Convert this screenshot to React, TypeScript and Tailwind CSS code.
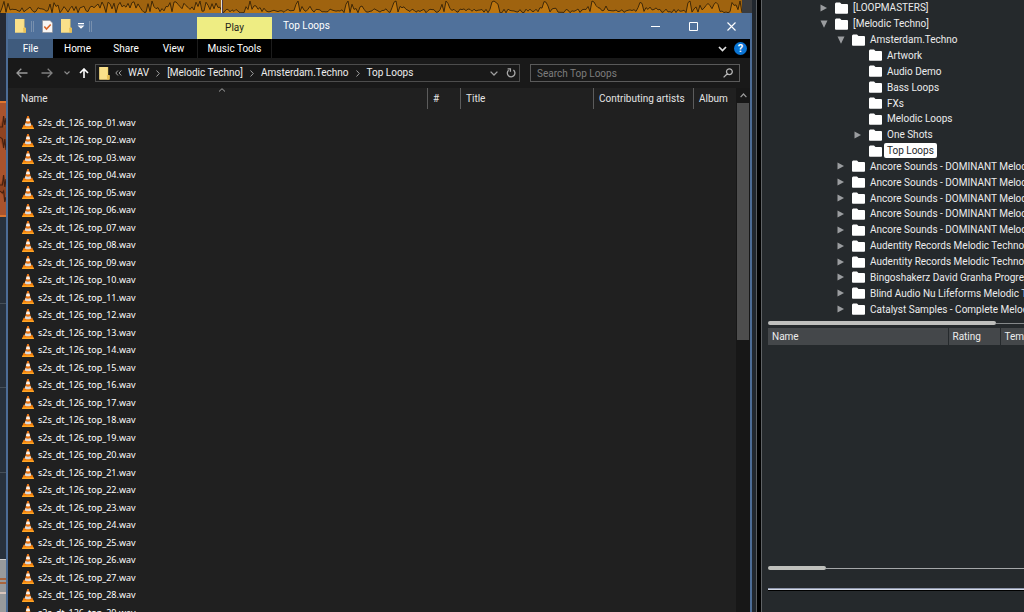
import { ReactNode } from "react";

type IconProps = { className?: string };

const files = Array.from(
  { length: 29 },
  (_, i) => `s2s_dt_126_top_${String(i + 1).padStart(2, "0")}.wav`,
);

type Node = { level: number; name: string; state?: "open" | "closed"; selected?: boolean };

const tree: Node[] = [
  { level: 0, name: "[LOOPMASTERS]", state: "closed" },
  { level: 0, name: "[Melodic Techno]", state: "open" },
  { level: 1, name: "Amsterdam.Techno", state: "open" },
  { level: 2, name: "Artwork" },
  { level: 2, name: "Audio Demo" },
  { level: 2, name: "Bass Loops" },
  { level: 2, name: "FXs" },
  { level: 2, name: "Melodic Loops" },
  { level: 2, name: "One Shots", state: "closed" },
  { level: 2, name: "Top Loops", selected: true },
  { level: 1, name: "Ancore Sounds - DOMINANT Melodic", state: "closed" },
  { level: 1, name: "Ancore Sounds - DOMINANT Melodic", state: "closed" },
  { level: 1, name: "Ancore Sounds - DOMINANT Melodic", state: "closed" },
  { level: 1, name: "Ancore Sounds - DOMINANT Melodic", state: "closed" },
  { level: 1, name: "Ancore Sounds - DOMINANT Melodic", state: "closed" },
  { level: 1, name: "Audentity Records Melodic Techno", state: "closed" },
  { level: 1, name: "Audentity Records Melodic Techno", state: "closed" },
  { level: 1, name: "Bingoshakerz David Granha Progressive", state: "closed" },
  { level: 1, name: "Blind Audio Nu Lifeforms Melodic Techno", state: "closed" },
  { level: 1, name: "Catalyst Samples - Complete Melodic", state: "closed" },
];

const indent = ["pl-[52px]", "pl-[69px]", "pl-[86px]"];

function wavePoints(width: number) {
  let seed = 11;
  const next = () => {
    seed = (seed * 16807) % 2147483647;
    return seed / 2147483647;
  };
  const points: string[] = [];
  for (let x = 0; x <= width; x += 2) {
    const dense = (x > 100 && x < 222) || x > 690;
    const beat = x % 49;
    const reach = beat < 10 || dense ? 11 : beat < 20 || x < 100 ? 7 : 4;
    const lift = beat === 4 || beat === 5 ? 8 : 0;
    points.push(`${x},${Math.max(1, 12.8 - next() * reach - lift).toFixed(1)}`);
  }
  return points.join(" ");
}

const wave = wavePoints(742);

function TopWave() {
  return (
    <svg className="h-[13px] min-w-0 flex-1" viewBox="0 0 742 13" preserveAspectRatio="none" aria-hidden="true">
      <rect width="742" height="13" fill="#9f630f" />
      <polygon points={`0,14 ${wave} 742,14`} fill="#bd7610" />
      <polyline points={wave} fill="none" stroke="#3f2808" strokeWidth="1" />
      <rect x="221" width="1" height="13" fill="#e8dfd0" />
      <rect x="222" width="1" height="13" fill="#4a3a4a" />
    </svg>
  );
}

function SideWave() {
  return (
    <svg className="h-[116px] w-full" viewBox="0 0 5 116" preserveAspectRatio="none" aria-hidden="true">
      <rect width="5" height="116" fill="#a9532d" />
      <rect width="5" height="2" fill="#e0762f" />
      <rect y="114" width="5" height="2" fill="#d9742f" />
      <path d="M0 26 1 20 2 24 3 15 4 28 5 18V46L4 37 3 49 2 38 1 44 0 36ZM0 84 1 80 2 84 3 74 4 88 5 78V92L4 101 3 88 2 94 0 90Z" fill="#8f4321" />
      <path d="M0 26H2L3 15 4 24 5 17M0 36 2 38 3 47 4 38 5 49M0 84H2L3 74 4 86 5 78M0 90 2 92 3 90 4 101 5 96" fill="none" stroke="#47200f" strokeWidth="1" />
    </svg>
  );
}

function YellowFolder({ className }: IconProps) {
  return (
    <svg className={className} viewBox="0 0 12 14" aria-hidden="true">
      <path d="M1 0H10.5V8.5L12 9V13.5H1Z" fill="#f1cf68" />
      <path d="M1 0H9.8V13.5H1Z" fill="#fae08a" />
      <path d="M9 9 10.5 8.5 12 9V13.5L9.6 14Z" fill="#e8c057" />
    </svg>
  );
}

function TaskIcon({ className }: IconProps) {
  return (
    <svg className={className} viewBox="0 0 11 13" aria-hidden="true">
      <path d="M.5.5H8L10.5 3V12.5H.5Z" fill="#f8f6f4" stroke="#8d8f96" strokeWidth=".6" />
      <path d="M2.3 6.5 4.5 9 8.7 4.5" fill="none" stroke="#d9662a" strokeWidth="1.6" />
    </svg>
  );
}

function Cone({ className }: IconProps) {
  return (
    <svg className={className} viewBox="0 0 12 13" aria-hidden="true">
      <path d="M1.6 8.8H10.4L12 12.9H0Z" fill="#f07a08" />
      <path d="M.5 11.6H11.5L12 13H0Z" fill="#ffa726" />
      <path d="M5.2 0H6.8L9.3 9.6Q6 11.4 2.7 9.6Z" fill="#ea7413" />
      <path d="M4.6 2.5H7.4L8.1 5Q6 5.8 3.9 5Z" fill="#f3f1ee" />
      <path d="M3.4 7.1Q6 8.2 8.6 7.1L9.2 9.5Q6 11.2 2.8 9.5Z" fill="#dcdcdc" />
    </svg>
  );
}

function Stroke({ className, d, box = "0 0 12 12", w = 1.4 }: IconProps & { d: string; box?: string; w?: number }) {
  return (
    <svg className={className} viewBox={box} fill="none" stroke="currentColor" strokeWidth={w} aria-hidden="true">
      <path d={d} />
    </svg>
  );
}

function Folder() {
  return (
    <svg className="h-[12px] w-[13px] shrink-0" viewBox="0 0 13 12" aria-hidden="true">
      <path d="M0 2Q0 .5 1.2.5H5L6.5 2H12Q13 2 13 3V11Q13 11.8 12 11.8H1Q0 11.8 0 11Z" fill="#fff" />
    </svg>
  );
}

function IconButton({ label, className, children }: { label: string; className?: string; children: ReactNode }) {
  return (
    <button type="button" aria-label={label} className={`flex shrink-0 items-center justify-center ${className ?? ""}`}>
      {children}
    </button>
  );
}

function TitleBar() {
  return (
    <header className="flex h-[26px] shrink-0 items-stretch bg-[#50719b]">
      <div className="flex w-[189px] items-center pl-[6px]">
        <YellowFolder className="h-[14px] w-[12px]" />
        <span className="ml-[5px] h-[11px] w-[3px] border-x border-[#7890ae]" />
        <IconButton label="Properties" className="ml-[8px]">
          <TaskIcon className="h-[13px] w-[11px]" />
        </IconButton>
        <IconButton label="New folder" className="ml-[7px]">
          <YellowFolder className="h-[14px] w-[12px]" />
        </IconButton>
        <IconButton label="Customize Quick Access Toolbar" className="ml-[5px] text-white">
          <Stroke className="h-[6px] w-[8px]" box="0 0 8 6" d="M1 .7H7M2 3 4 5 6 3Z" w={1.2} />
        </IconButton>
        <span className="ml-[4px] h-[11px] w-[3px] border-x border-[#7890ae]" />
      </div>
      <div className="mt-[4px] flex w-[75px] items-center justify-center bg-[#eeed83] text-[#24241c]">Play</div>
      <h1 className="flex flex-1 items-center pl-[11px] text-white">Top Loops</h1>
      <IconButton label="Minimize" className="w-[38px] text-white">
        <Stroke className="size-[9px]" box="0 0 9 9" d="M0 4.5H9" w={1} />
      </IconButton>
      <IconButton label="Maximize" className="w-[38px] text-white">
        <Stroke className="size-[9px]" box="0 0 9 9" d="M.5.5H8.5V8.5H.5Z" w={1} />
      </IconButton>
      <IconButton label="Close" className="w-[38px] text-white">
        <Stroke className="size-[9px]" box="0 0 9 9" d="M.5.5 8.5 8.5M8.5.5.5 8.5" w={1.1} />
      </IconButton>
    </header>
  );
}

function Ribbon() {
  return (
    <nav className="flex h-[19px] shrink-0 items-stretch bg-black text-white">
      <button type="button" className="w-[45px] bg-[#3f5b7d]">File</button>
      <button type="button" className="w-[49px]">Home</button>
      <button type="button" className="w-[48px]">Share</button>
      <button type="button" className="w-[47px]">View</button>
      <button type="button" className="w-[75px] border-x border-[#1c1c1c]">Music Tools</button>
      <span className="flex-1" />
      <IconButton label="Collapse ribbon" className="w-[16px] text-[#e0e0e0]">
        <Stroke className="h-[6px] w-[9px]" box="0 0 9 6" d="M1 1 4.5 4.5 8 1" w={1.7} />
      </IconButton>
      <button
        type="button"
        aria-label="Help"
        className="mr-[3px] ml-[4px] size-[13px] self-center rounded-full bg-[#0a74d4] text-[11px] leading-[13px] font-bold"
      >
        ?
      </button>
    </nav>
  );
}

function Crumb({ children, last }: { children: string; last?: boolean }) {
  return (
    <>
      <a href="#" className="whitespace-nowrap text-[#ededed]">{children}</a>
      {!last && <Stroke className="mx-[7px] h-[7px] w-[4px] text-[#a0a0a0]" box="0 0 4 7" d="M.5.5 3.3 3.5.5 6.5" w={1} />}
    </>
  );
}

function AddressBar() {
  return (
    <div className="flex h-[30px] shrink-0 items-center bg-[#191919] pr-[10px]">
      <IconButton label="Back" className="ml-[8px] text-[#9a9a9a]">
        <Stroke className="h-[10px] w-[12px]" box="0 0 12 10" d="M11.5 5H1M5.3.8 1 5 5.3 9.2" w={1.3} />
      </IconButton>
      <IconButton label="Forward" className="ml-[13px] text-[#808080]">
        <Stroke className="h-[10px] w-[12px]" box="0 0 12 10" d="M.5 5H11M6.7.8 11 5 6.7 9.2" w={1.3} />
      </IconButton>
      <IconButton label="Recent locations" className="ml-[11px] text-[#8a8a8a]">
        <Stroke className="h-[4px] w-[6px]" box="0 0 6 4" d="M.5.5 3 3 5.5.5" w={1.2} />
      </IconButton>
      <IconButton label="Up" className="ml-[9px] text-white">
        <Stroke className="size-[10px]" box="0 0 10 10" d="M5 10V1M1 5 5 1 9 5" w={1.6} />
      </IconButton>
      <div className="ml-[6px] flex h-[18px] min-w-0 flex-1 items-center border border-[#4d4d4d] pl-[2px]">
        <YellowFolder className="h-[13px] w-[12px]" />
        <Stroke className="mr-[6px] ml-[5px] h-[6px] w-[7px] text-[#a0a0a0]" box="0 0 7 6" d="M3 .5.8 3 3 5.5M6.3.5 4.1 3 6.3 5.5" w={1} />
        <Crumb>WAV</Crumb>
        <Crumb>[Melodic Techno]</Crumb>
        <Crumb>Amsterdam.Techno</Crumb>
        <Crumb last>Top Loops</Crumb>
        <span className="flex-1" />
        <IconButton label="Previous locations" className="mr-[8px] text-[#a0a0a0]">
          <Stroke className="h-[5px] w-[8px]" box="0 0 8 5" d="M.6.6 4 4 7.4.6" w={1.3} />
        </IconButton>
        <IconButton label="Refresh" className="mr-[3px] text-[#a8a8a8]">
          <Stroke className="size-[10px]" box="0 0 10 10" d="M7.4 2A3.8 3.8 0 1 1 2.6 2.2M1.6.8H4.4V3.8" w={1.3} />
        </IconButton>
      </div>
      <div className="ml-[10px] flex h-[18px] w-[210px] items-center border border-[#5a5a5a]">
        <input
          type="search"
          aria-label="Search Top Loops"
          placeholder="Search Top Loops"
          className="h-full min-w-0 flex-1 bg-transparent pl-[6px] text-white outline-none placeholder:text-[#7d7d7d]"
        />
        <IconButton label="Search" className="mr-[6px] text-[#b5b5b5]">
          <Stroke className="size-[10px]" box="0 0 10 10" d="M9.3 3.7A2.9 2.9 0 1 1 3.5 3.7 2.9 2.9 0 1 1 9.3 3.7M4.3 5.7.6 9.4" w={1.3} />
        </IconButton>
      </div>
    </div>
  );
}

function Heading({ children, sorted }: { children: string; sorted?: boolean }) {
  return (
    <th scope="col" className="group h-[26px] p-0 text-left align-top font-normal">
      <div className="relative flex h-[21px] items-center border-r border-[#5c5c5c] pl-[5px] whitespace-nowrap text-[#e4e4e4] group-last:border-r-0">
        {children}
        {sorted && <Stroke className="absolute top-0 left-1/2 h-[4px] w-[7px] -translate-x-1/2 text-[#a0a0a0]" box="0 0 7 4" d="M.5 3.5 3.5.7 6.5 3.5" w={1} />}
      </div>
    </th>
  );
}

function FileList() {
  return (
    <div className="flex min-h-0 flex-1">
      <main className="min-w-0 flex-1 overflow-hidden pl-[8px]">
        <table className="w-full table-fixed border-collapse">
          <colgroup>
            <col />
            <col className="w-[33px]" />
            <col className="w-[133px]" />
            <col className="w-[100px]" />
            <col className="w-[42px]" />
          </colgroup>
          <thead>
            <tr>
              <Heading sorted>Name</Heading>
              <Heading>#</Heading>
              <Heading>Title</Heading>
              <Heading>Contributing artists</Heading>
              <Heading>Album</Heading>
            </tr>
          </thead>
          <tbody className="font-['Noto_Sans',sans-serif] text-[9px]">
            {files.map((file) => (
              <tr key={file} className="h-[17px] even:h-[18px]">
                <td className="p-0">
                  <div className="flex h-[17px] items-center gap-[4px] pl-[6px] whitespace-nowrap text-white">
                    <Cone className="h-[13px] w-[12px]" />
                    {file}
                  </div>
                </td>
                <td className="p-0" />
                <td className="p-0" />
                <td className="p-0" />
                <td className="p-0" />
              </tr>
            ))}
          </tbody>
        </table>
      </main>
      <div className="flex w-[14px] shrink-0 flex-col bg-[#171717] px-[1px]">
        <IconButton label="Scroll up" className="h-[15px] text-[#9a9a9a]">
          <Stroke className="h-[5px] w-[7px]" box="0 0 7 5" d="M.6 4.2 3.5 1 6.4 4.2" w={1.2} />
        </IconButton>
        <div className="h-[237px] bg-[#4d4d4d]" />
      </div>
    </div>
  );
}

function Explorer() {
  return (
    <section aria-label="Top Loops" className="flex min-w-0 flex-1 flex-col border-x-2 border-[#4c6c96] bg-[#202020]">
      <TitleBar />
      <Ribbon />
      <AddressBar />
      <FileList />
    </section>
  );
}

function LeftTracks() {
  return (
    <div className="flex w-[6px] shrink-0 flex-col bg-[#28313c]" aria-hidden="true">
      <div className="h-[88px] bg-[#252a35]" />
      <SideWave />
      <div className="mt-[86px] h-px bg-[#46505a]" />
      <div className="mt-[83px] h-px bg-[#46505a]" />
      <div className="mt-[84px] h-px bg-[#46505a]" />
      <div className="mt-[86px] flex-1 border-t border-[#d0d0d0] bg-[#989a9c]">
        <div className="mt-[18px] h-[2px] bg-[#a9643c]" />
        <div className="mt-[2px] h-[2px] bg-[#a9643c]" />
        <div className="mt-[8px] h-[2px] bg-[#d8c5bc]" />
      </div>
    </div>
  );
}

function TreeRow({ node }: { node: Node }) {
  return (
    <li className={`flex items-center whitespace-nowrap ${indent[node.level]}`}>
      <span className="flex w-[15px] shrink-0 items-center">
        {node.state && (
          <svg className="size-[8px]" viewBox="0 0 8 8" aria-hidden="true">
            <path d={node.state === "open" ? "M.5.5H7.5L4 7.8Z" : "M.5 .5 7 4 .5 7.5Z"} fill="#9b9da0" />
          </svg>
        )}
      </span>
      <Folder />
      <span className={node.selected ? "ml-[2px] rounded-[2px] bg-white px-[3px] text-[#25282b]" : "ml-[5px]"}>
        {node.name}
      </span>
    </li>
  );
}

function Browser() {
  return (
    <aside className="flex w-[262px] shrink-0 flex-col overflow-hidden bg-[#25292c] pl-[6px] text-[#ececec]">
      <ul className="grid h-[317px] shrink-0 auto-rows-fr leading-[15px]">
        {tree.map((node, i) => (
          <TreeRow key={i} node={node} />
        ))}
      </ul>
      <div className="mt-[4px] flex h-[4px] shrink-0 items-center">
        <span className="h-[4px] w-[228px] rounded-full bg-[#bfbfbd]" />
        <span className="h-px flex-1 bg-[#85888a]" />
      </div>
      <div className="mt-[3px] h-[17px] shrink-0 overflow-hidden">
        <table className="w-[400px] table-fixed border-collapse bg-[#44474a]">
          <thead>
            <tr className="h-[17px] text-left leading-[17px]">
              <th scope="col" className="w-[180px] border-r border-[#25292c] p-0 pl-[4px] font-normal">Name</th>
              <th scope="col" className="w-[52px] border-r border-[#25292c] p-0 pl-[4px] font-normal">Rating</th>
              <th scope="col" className="p-0 pl-[4px] font-normal">Tempo</th>
            </tr>
          </thead>
        </table>
      </div>
      <div className="flex-1" />
      <div className="flex h-[4px] shrink-0 items-center">
        <span className="h-[4px] w-[58px] rounded-full bg-[#bfc0bc]" />
        <span className="h-px flex-1 bg-[#a5a7a9]" />
      </div>
      <div className="mt-[18px] mb-[21px] h-[3px] shrink-0 border-y border-t-[#8d95ab] border-b-black bg-[#d5dae8]" />
    </aside>
  );
}

export default function App() {
  return (
    <div className="flex h-screen overflow-hidden bg-[#25292c] font-['Roboto','Noto_Sans',sans-serif] text-[10px] leading-[14px]">
      <div className="flex min-w-0 flex-1 flex-col">
        <div className="flex h-[13px] shrink-0 bg-[#3a3c3f]">
          <TopWave />
          <div className="w-[10px]" />
        </div>
        <div className="flex min-h-0 flex-1">
          <LeftTracks />
          <Explorer />
        </div>
      </div>
      <div className="flex w-[10px] shrink-0" aria-hidden="true">
        <div className="w-[4px] bg-[#20262d]" />
        <div className="w-[1px] bg-[#5a5d60]" />
        <div className="w-[4px] bg-black" />
        <div className="w-[1px] bg-[#606366]" />
      </div>
      <Browser />
    </div>
  );
}
